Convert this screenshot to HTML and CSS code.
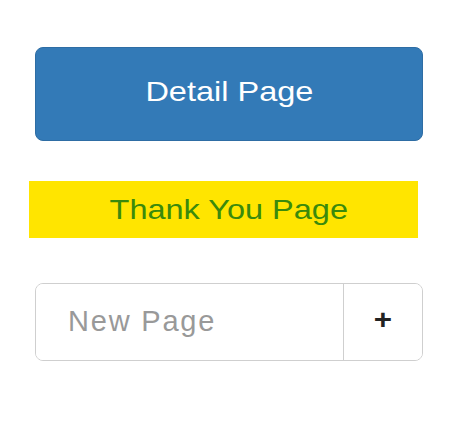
FILE: index.html
```html
<!DOCTYPE html>
<html lang="en">
<head>
<meta charset="utf-8">
<title>Pages</title>
<link rel="stylesheet" href="styles.css">
</head>
<body>
<div class="wrap">
  <button class="btn-primary" type="button"><span class="stretch">Detail Page</span></button>
  <div class="highlight"><span class="stretch">Thank You Page</span></div>
  <div class="input-group">
    <input class="page-input" type="text" placeholder="New Page">
    <button class="addon" type="button"><span class="stretch">+</span></button>
  </div>
</div>
</body>
</html>
```

FILE: styles.css
```css
* { box-sizing: border-box; }
html, body { margin: 0; padding: 0; background: #fff; }
body {
  font-family: "Liberation Sans", Arial, sans-serif;
  width: 474px;
  height: 430px;
  overflow: hidden;
}
.wrap {
  display: flex;
  flex-direction: column;
  align-items: flex-start;
  padding: 47px 0 0 35px;
  width: 423px;
}
.stretch {
  display: inline-block;
  transform: scaleX(1.16);
}
.btn-primary {
  display: flex;
  align-items: center;
  justify-content: center;
  width: 388px;
  height: 94px;
  margin: 0;
  padding: 0 0 4px 0;
  background: #337ab7;
  border: 1px solid #2e6da4;
  border-radius: 8px;
  color: #fff;
  font-family: "Liberation Sans", Arial, sans-serif;
  font-size: 28px;
}
.highlight {
  display: flex;
  align-items: center;
  justify-content: center;
  width: 389px;
  height: 57px;
  margin: 40px 0 0 -6px;
  padding: 0 0 0 10px;
  background: #ffe500;
  color: #3a8a0c;
  font-size: 28px;
}
.input-group {
  display: grid;
  grid-template-columns: 308px 78px;
  width: 388px;
  height: 78px;
  margin-top: 45px;
  border: 1px solid #cfcfcf;
  border-radius: 8px;
  overflow: hidden;
}
.page-input {
  width: 100%;
  min-width: 0;
  height: 100%;
  margin: 0;
  border: none;
  border-right: 1px solid #cfcfcf;
  padding: 0 0 2px 32px;
  font-family: "Liberation Sans", Arial, sans-serif;
  font-size: 29px;
  letter-spacing: 1.8px;
  color: #555;
  outline: none;
  background: #fff;
}
.page-input::placeholder { color: #999; }
.addon {
  width: 100%;
  height: 100%;
  display: flex;
  align-items: center;
  justify-content: center;
  margin: 0;
  padding: 0 0 4px 0;
  border: none;
  background: #fff;
  color: #222;
  font-family: "Liberation Sans", Arial, sans-serif;
  font-size: 27px;
  font-weight: bold;
}
```
